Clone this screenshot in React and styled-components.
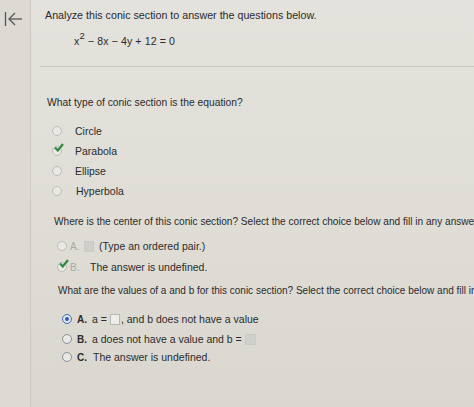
import styled, { createGlobalStyle } from "styled-components";

const GlobalStyle = createGlobalStyle`
  html, body {
    margin: 0;
    padding: 0;
    background: #dfddd6;
  }
  body {
    font-family: "Liberation Sans", Arial, sans-serif;
    color: #2b2b2b;
  }
`;

const Page = styled.div`
  display: flex;
  width: 474px;
  height: 407px;
  overflow: hidden;
  background: linear-gradient(180deg, #e4e2dc 0%, #dfddd6 55%, #d9d7d0 100%);
`;

const Sidebar = styled.div`
  width: 31px;
  flex-shrink: 0;
  background: #dcdad3;
  border-right: 1px solid #cbc9c2;
  padding-top: 11px;
  padding-left: 4px;
  box-sizing: border-box;
`;

const Main = styled.div`
  flex: 1;
  display: flex;
  flex-direction: column;
  min-width: 0;
  overflow: hidden;
`;

const Header = styled.div`
  padding: 9px 0 0 14px;
  height: 67px;
  box-sizing: border-box;
  border-bottom: 1px solid #c9c7c0;
  margin-left: 9px;
`;

const Title = styled.div`
  font-size: 10.7px;
  margin-left: -9px;
  white-space: nowrap;
`;

const Equation = styled.div`
  font-size: 10.6px;
  margin: 14px 0 0 20px;
  letter-spacing: 0.1px;
  sup {
    font-size: 9.5px;
    vertical-align: 6px;
    line-height: 0;
  }
`;

const Question = styled.div`
  font-size: ${(p) => p.$size || 11}px;
  margin: ${(p) => p.$top}px 0 0 ${(p) => p.$left}px;
  white-space: nowrap;
`;

const Options = styled.div`
  display: flex;
  flex-direction: column;
  gap: ${(p) => p.$gap}px;
  margin: ${(p) => p.$top}px 0 0 ${(p) => p.$left}px;
`;

const Option = styled.div`
  display: flex;
  align-items: center;
  height: 12px;
  font-size: 10.5px;
  white-space: nowrap;
  margin-top: ${(p) => p.$shift || 0}px;
`;

const RadioWrap = styled.span`
  position: relative;
  width: 10px;
  height: 10px;
  flex-shrink: 0;
  margin-right: ${(p) => p.$gap}px;
`;

const Radio = styled.span`
  display: block;
  width: 10px;
  height: 10px;
  box-sizing: border-box;
  border-radius: 50%;
  border: 1px solid ${(p) => (p.$selected ? "#3f6fb5" : p.$dark ? "#8a8f96" : "#bdbcb8")};
  background: ${(p) => (p.$selected ? "#dfe6f0" : "#e9e8e4")};
  position: relative;
  &::after {
    content: "";
    display: ${(p) => (p.$selected ? "block" : "none")};
    position: absolute;
    left: 2px;
    top: 2px;
    width: 4px;
    height: 4px;
    border-radius: 50%;
    background: #2d5ea8;
  }
`;

const Check = styled.svg`
  position: absolute;
  left: 2px;
  top: -3px;
`;

const Letter = styled.span`
  width: ${(p) => p.$w}px;
  color: ${(p) => (p.$faded ? "#a9a9a7" : "#2b2b2b")};
  font-size: 10px;
  font-weight: ${(p) => (p.$faded ? 400 : 700)};
`;

const Blank = styled.span`
  display: inline-block;
  width: ${(p) => p.$w || 10}px;
  height: 11px;
  box-sizing: border-box;
  border: 1px solid ${(p) => (p.$filled ? "#c9c9c6" : "#b7b7b4")};
  background: ${(p) => (p.$filled ? "#cfcfcc" : "#eeede9")};
  margin: 0 ${(p) => p.$mr ?? 4}px 0 ${(p) => p.$ml ?? 3}px;
`;

function BackIcon() {
  return (
    <svg width="20" height="16" viewBox="0 0 20 16">
      <line x1="1.5" y1="1" x2="1.5" y2="15" stroke="#555" strokeWidth="1.3" />
      <line x1="5" y1="8" x2="18" y2="8" stroke="#555" strokeWidth="1.3" />
      <polyline points="11,2 5,8 11,14" fill="none" stroke="#555" strokeWidth="1.3" />
    </svg>
  );
}

function RadioButton({ selected, checked, dark, gap }) {
  return (
    <RadioWrap $gap={gap}>
      <Radio $selected={selected} $dark={dark} />
      {checked && (
        <Check width="10" height="9" viewBox="0 0 10 9">
          <polyline points="1,4.5 3.8,7.5 9,1" fill="none" stroke="#2f8a3e" strokeWidth="2.2" />
        </Check>
      )}
    </RadioWrap>
  );
}

export default function App() {
  return (
    <>
      <GlobalStyle />
      <Page>
        <Sidebar>
          <BackIcon />
        </Sidebar>
        <Main>
          <Header>
            <Title>Analyze this conic section to answer the questions below.</Title>
            <Equation>
              x<sup>2</sup> − 8x − 4y + 12 = 0
            </Equation>
          </Header>

          <Question $top={30} $left={16} $size={10.3}>
            What type of conic section is the equation?
          </Question>
          <Options $top={17} $left={21} $gap={8}>
            <Option>
              <RadioButton gap={13} />
              Circle
            </Option>
            <Option>
              <RadioButton checked gap={13} />
              Parabola
            </Option>
            <Option>
              <RadioButton gap={13} />
              Ellipse
            </Option>
            <Option>
              <RadioButton gap={14} />
              Hyperbola
            </Option>
          </Options>

          <Question $top={19} $left={23} $size={10.1}>
            Where is the center of this conic section? Select the correct choice below and fill in any answer boxes
          </Question>
          <Options $top={13} $left={26} $gap={9}>
            <Option>
              <RadioButton gap={3} />
              <Letter $faded $w={14}>A.</Letter>
              <Blank $filled $w={10} $ml={0} $mr={5} />
              (Type an ordered pair.)
            </Option>
            <Option>
              <RadioButton checked gap={3} />
              <Letter $faded $w={20}>B.</Letter>
              The answer is undefined.
            </Option>
          </Options>

          <Question $top={12} $left={27} $size={10}>
            What are the values of a and b for this conic section? Select the correct choice below and fill in any answer boxes
          </Question>
          <Options $top={17} $left={31} $gap={8}>
            <Option>
              <RadioButton selected dark gap={5} />
              <Letter $w={15}>A.</Letter>
              a = <Blank $w={10} $ml={3} $mr={1} />, and b does not have a value
            </Option>
            <Option>
              <RadioButton dark gap={5} />
              <Letter $w={15}>B.</Letter>
              a does not have a value and b = <Blank $filled $w={11} $ml={3} />
            </Option>
            <Option $shift={-2}>
              <RadioButton dark gap={5} />
              <Letter $w={16}>C.</Letter>
              The answer is undefined.
            </Option>
          </Options>
        </Main>
      </Page>
    </>
  );
}
